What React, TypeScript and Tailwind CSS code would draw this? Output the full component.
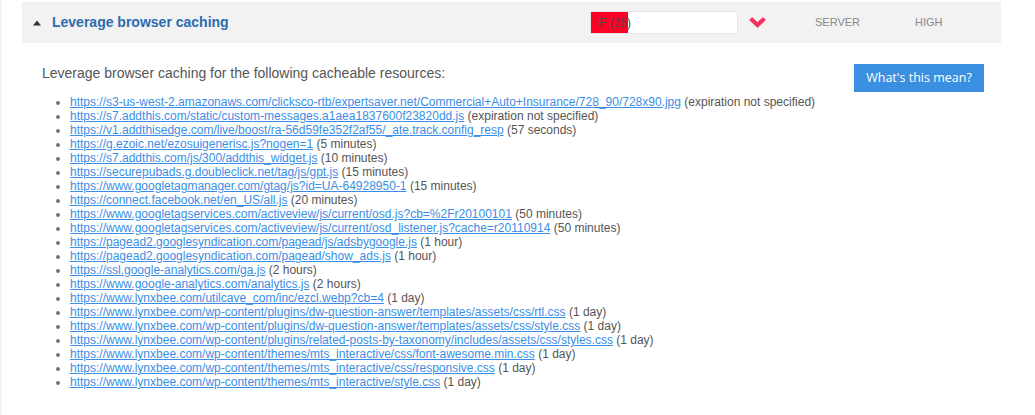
import React from "react";

const items: [string, string][] = [
  ["https://s3-us-west-2.amazonaws.com/clicksco-rtb/expertsaver.net/Commercial+Auto+Insurance/728_90/728x90.jpg", "(expiration not specified)"],
  ["https://s7.addthis.com/static/custom-messages.a1aea1837600f23820dd.js", "(expiration not specified)"],
  ["https://v1.addthisedge.com/live/boost/ra-56d59fe352f2af55/_ate.track.config_resp", "(57 seconds)"],
  ["https://g.ezoic.net/ezosuigenerisc.js?nogen=1", "(5 minutes)"],
  ["https://s7.addthis.com/js/300/addthis_widget.js", "(10 minutes)"],
  ["https://securepubads.g.doubleclick.net/tag/js/gpt.js", "(15 minutes)"],
  ["https://www.googletagmanager.com/gtag/js?id=UA-64928950-1", "(15 minutes)"],
  ["https://connect.facebook.net/en_US/all.js", "(20 minutes)"],
  ["https://www.googletagservices.com/activeview/js/current/osd.js?cb=%2Fr20100101", "(50 minutes)"],
  ["https://www.googletagservices.com/activeview/js/current/osd_listener.js?cache=r20110914", "(50 minutes)"],
  ["https://pagead2.googlesyndication.com/pagead/js/adsbygoogle.js", "(1 hour)"],
  ["https://pagead2.googlesyndication.com/pagead/show_ads.js", "(1 hour)"],
  ["https://ssl.google-analytics.com/ga.js", "(2 hours)"],
  ["https://www.google-analytics.com/analytics.js", "(2 hours)"],
  ["https://www.lynxbee.com/utilcave_com/inc/ezcl.webp?cb=4", "(1 day)"],
  ["https://www.lynxbee.com/wp-content/plugins/dw-question-answer/templates/assets/css/rtl.css", "(1 day)"],
  ["https://www.lynxbee.com/wp-content/plugins/dw-question-answer/templates/assets/css/style.css", "(1 day)"],
  ["https://www.lynxbee.com/wp-content/plugins/related-posts-by-taxonomy/includes/assets/css/styles.css", "(1 day)"],
  ["https://www.lynxbee.com/wp-content/themes/mts_interactive/css/font-awesome.min.css", "(1 day)"],
  ["https://www.lynxbee.com/wp-content/themes/mts_interactive/css/responsive.css", "(1 day)"],
  ["https://www.lynxbee.com/wp-content/themes/mts_interactive/style.css", "(1 day)"],
];

export default function App() {
  return (
    <div
      className="w-[1035px] h-[415px] bg-white flex overflow-hidden"
      style={{ fontFamily: '"Liberation Sans", Arial, sans-serif' }}
    >
      <div className="w-[2px] bg-[#f4f4f4] shrink-0" />
      <div className="flex-1 pt-[2px]">
        <div className="ml-[20px] w-[979px]">
          <div className="h-[41px] bg-[#f2f2f2] flex items-center">
            <svg width="8" height="6" viewBox="0 0 8 6" className="ml-[11px] mr-[11px]">
              <path d="M0 5.5 L4 0.5 L8 5.5 Z" fill="#333" />
            </svg>
            <div className="text-[14px] font-bold text-[#2b6cb0] w-[538px]">Leverage browser caching</div>
            <div className="relative w-[148px] h-[23px] bg-white border border-[#e6e6e6]">
              <div className="absolute left-0 top-0 h-full w-[37px] bg-[#ff0026]" />
              <div className="absolute left-[8px] top-0 h-full flex items-center text-[12px] text-[#4a4a4a]">F (25)</div>
            </div>
            <svg width="17" height="11" viewBox="0 0 17 11" className="ml-[11px]">
              <path d="M0.5 3 L3 0.5 L8.5 5.5 L14 0.5 L16.5 3 L8.5 10.5 Z" fill="#f2335d" stroke="#f2335d" strokeWidth="0.8" strokeLinejoin="round" />
            </svg>
            <div className="ml-[49px] w-[100px] text-[11px] text-[#888]">SERVER</div>
            <div className="text-[11px] text-[#888]">HIGH</div>
          </div>
        </div>
        <div className="ml-[40px] mr-[51px] pt-[21px] flex">
          <div className="flex-1">
            <div className="text-[14px] text-[#555] leading-[18px]">
              Leverage browser caching for the following cacheable resources:
            </div>
            <ul className="mt-[13px] ml-[28px] list-disc text-[12px] leading-[14px] text-[#555] marker:text-[#777]">
              {items.map(([u, t], i) => (
                <li key={i} className="whitespace-nowrap">
                  <a href="#" className="text-[#3a8ee6] underline">{u}</a> {t}
                </li>
              ))}
            </ul>
          </div>
          <div className="pt-0">
            <button
              className="w-[130px] h-[28px] bg-[#3b8fe1] text-white text-[12.5px]"
              style={{ fontFamily: '"Open Sans", sans-serif' }}
            >
              What's this mean?
            </button>
          </div>
        </div>
      </div>
    </div>
  );
}
